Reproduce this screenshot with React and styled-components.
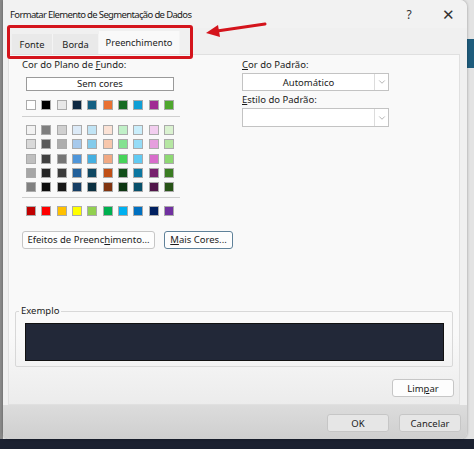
import React from 'react';
import styled, { createGlobalStyle } from 'styled-components';
import { ChevronDown } from 'lucide-react';

// Office theme colours shown in the picker
const themeRow = ['#FFFFFF', '#000000', '#E8E8E8', '#0E2841', '#156082', '#E97132', '#196B24', '#0F9ED5', '#A02B93', '#4EA72E'];
const tintRows = [
  ['#F2F2F2', '#7F7F7F', '#D0D0D0', '#DCEAF7', '#C1E4F5', '#FBE2D5', '#C1F0C8', '#CAEEFB', '#F2CEEF', '#DAF2D0'],
  ['#D9D9D9', '#595959', '#ADADAD', '#A6C9EC', '#83CBEB', '#F7C7AC', '#84E291', '#95DCF7', '#E59EDD', '#B5E6A2'],
  ['#BFBFBF', '#404040', '#757575', '#4E95D9', '#45B0E1', '#F1A983', '#47D45A', '#61CBF3', '#D86DCB', '#8ED973'],
  ['#A6A6A6', '#262626', '#3A3A3A', '#215F9A', '#0F4761', '#C04F15', '#124F1A', '#0B76A0', '#77206D', '#3A7C22'],
  ['#808080', '#0D0D0D', '#161616', '#153D64', '#0A2F40', '#803410', '#0C3511', '#074F6A', '#501549', '#275317'],
];
const standardRow = ['#C00000', '#FF0000', '#FFC000', '#FFFF00', '#92D050', '#00B050', '#00B0F0', '#0070C0', '#002060', '#7030A0'];

const GlobalStyle = createGlobalStyle`
  html, body {
    margin: 0;
    padding: 0;
  }
  body {
    width: 474px;
    height: 449px;
    overflow: hidden;
    font-family: "Noto Sans", "Liberation Sans", sans-serif;
    color: #1b1b1b;
  }
`;

const Desktop = styled.div`
  width: 474px;
  height: 449px;
  box-sizing: border-box;
  padding: 0 7px 10px 3px;
  background:
    linear-gradient(#1e5c7c, #1e5c7c) right 0 top 39px / 7px 29px no-repeat,
    linear-gradient(to top, #1b2130 0 10px, transparent 10px),
    linear-gradient(90deg, #8a8a8a 0 3px, #e3e3e3 3px);
`;

const Dialog = styled.div`
  position: relative;
  width: 464px;
  height: 439px;
  display: flex;
  flex-direction: column;
  background: #f0f0f0;
  border-radius: 0 7px 7px 7px;
  box-shadow: 0 0 3px rgba(0, 0, 0, 0.35);
  overflow: hidden;
`;

const TitleBar = styled.div`
  height: 28px;
  display: flex;
  align-items: center;
  padding-left: 7px;
  background: #f2f2f2;
`;

const TitleText = styled.span`
  flex: 1;
  padding-top: 1px;
  font-size: 9.5px;
  letter-spacing: -0.65px;
`;

const TitleButton = styled.span`
  width: 30px;
  text-align: center;
  font-size: ${p => p.$size || 12}px;
  color: #333;
  margin-right: ${p => p.$gap || 0}px;
`;

const TabStrip = styled.div`
  height: 26px;
  display: flex;
  align-items: flex-end;
  padding-left: 9px;
`;

const Tab = styled.div`
  width: ${p => p.$w}px;
  height: ${p => (p.$active ? 23 : 20)}px;
  display: flex;
  align-items: center;
  justify-content: center;
  font-size: 9.3px;
  background: ${p => (p.$active ? '#f9f9f9' : '#e9e9e9')};
  border-right: 1px solid #f4f4f4;
  box-sizing: border-box;
`;

const Highlight = styled.div`
  position: absolute;
  left: 4px;
  top: 25px;
  width: 186px;
  height: 34px;
  box-sizing: border-box;
  border: 3px solid #d4141c;
  border-radius: 3px;
`;

const Arrow = styled.svg`
  position: absolute;
  left: 196px;
  top: 17px;
`;

const Panel = styled.div`
  height: 351px;
  margin: 0 7px 0 5px;
  box-sizing: border-box;
  display: flex;
  flex-direction: column;
  background: linear-gradient(#f9f9f9 80%, #ececec);
  border: 1px solid #e0e0e0;
`;

const TopSection = styled.div`
  display: flex;
  padding: 4px 0 0 13px;
  gap: 62px;
`;

const Column = styled.div`
  width: ${p => p.$w}px;
  display: flex;
  flex-direction: column;
`;

const Label = styled.div`
  font-size: 9.5px;
  line-height: 12px;
  margin-top: ${p => p.$mt || 0}px;
  white-space: nowrap;
`;

const WideButton = styled.div`
  height: 14px;
  margin: 6px 6px 0 4px;
  box-sizing: border-box;
  border: 1px solid #9a9a9a;
  background: #fff;
  font-size: 9.5px;
  line-height: 12px;
  text-align: center;
`;

const SwatchRow = styled.div`
  display: flex;
  gap: 5.33px;
  margin: ${p => p.$mt || 0}px 0 0 4px;
`;

const SwatchGrid = styled.div`
  display: grid;
  grid-template-columns: repeat(10, 10px);
  column-gap: 5.33px;
  row-gap: 4.3px;
  margin: 8px 0 0 4px;
`;

const Swatch = styled.div`
  width: 10px;
  height: 10px;
  box-sizing: border-box;
  border: 1px solid #ababab;
  background: ${p => p.$c};
`;

const Separator = styled.div`
  height: 1px;
  background: #cfcfcf;
  margin-top: ${p => p.$mt}px;
`;

const Select = styled.div`
  height: ${p => p.$h}px;
  margin-top: 2px;
  display: flex;
  box-sizing: border-box;
  border: 1px solid #c3c3c3;
  background: #fff;
`;

const SelectValue = styled.div`
  flex: 1;
  display: flex;
  align-items: center;
  justify-content: center;
  font-size: 9.5px;
`;

const SelectArrow = styled.div`
  width: 13px;
  display: flex;
  align-items: center;
  justify-content: center;
  border-left: 1px solid #dcdcdc;
  color: #888;
`;

const ButtonRow = styled.div`
  display: flex;
  gap: 9px;
  padding-left: 13px;
  margin-top: 15px;
`;

const Button = styled.div`
  width: ${p => p.$w}px;
  height: ${p => p.$h || 18}px;
  box-sizing: border-box;
  display: flex;
  align-items: center;
  justify-content: center;
  font-size: 9.5px;
  background: ${p => p.$bg || '#fdfdfd'};
  border: 1px solid ${p => (p.$focus ? '#5f8199' : '#c6c6c6')};
  border-radius: 3px;
  box-shadow: ${p => (p.$focus ? 'inset 0 0 0 1px #fff' : 'none')};
`;

const Spacer = styled.div`
  flex: 1;
`;

const Group = styled.fieldset`
  margin: 0 6px;
  padding: 0 8px 5px 9px;
  border: 1px solid #d8d8d8;
  border-radius: 2px;
  min-width: 0;
`;

const Legend = styled.legend`
  padding: 0 2px;
  margin-left: -6px;
  font-size: 9.5px;
  line-height: 12px;
`;

const Sample = styled.div`
  height: 38px;
  margin-top: 6px;
  box-sizing: border-box;
  background: #222838;
  border: 1px solid #111;
`;

const RightRow = styled.div`
  display: flex;
  justify-content: flex-end;
  gap: 10px;
  padding-right: ${p => p.$pr}px;
  margin: ${p => p.$m};
`;

const Footer = styled.div`
  flex: 1;
  display: flex;
  flex-direction: column;
  background: linear-gradient(#dcdcdc, #cfcfcf);
`;

const Swatches = ({ colors }) => colors.map((c, i) => <Swatch key={i} $c={c} />);

export default function App() {
  return (
    <>
      <GlobalStyle />
      <Desktop>
        <Dialog>
          <TitleBar>
            <TitleText>Formatar Elemento de Segmentação de Dados</TitleText>
            <TitleButton $gap={9}>?</TitleButton>
            <TitleButton $size={15} $gap={4}>✕</TitleButton>
          </TitleBar>
          <TabStrip>
            <Tab $w={41}>Fonte</Tab>
            <Tab $w={46}>Borda</Tab>
            <Tab $w={81} $active>Preenchimento</Tab>
          </TabStrip>
          <Panel>
            <TopSection>
              <Column $w={158}>
                <Label>Cor do Plano de <u>F</u>undo:</Label>
                <WideButton>Sem cores</WideButton>
                <SwatchRow $mt={9}>
                  <Swatches colors={themeRow} />
                </SwatchRow>
                <Separator $mt={6} />
                <SwatchGrid>
                  {tintRows.map((row, r) => <Swatches key={r} colors={row} />)}
                </SwatchGrid>
                <Separator $mt={4.5} />
                <SwatchRow $mt={8}>
                  <Swatches colors={standardRow} />
                </SwatchRow>
              </Column>
              <Column $w={147}>
                <Label><u>C</u>or do Padrão:</Label>
                <Select $h={18}>
                  <SelectValue>Automático</SelectValue>
                  <SelectArrow><ChevronDown size={10} strokeWidth={1.5} /></SelectArrow>
                </Select>
                <Label $mt={3}><u>E</u>stilo do Padrão:</Label>
                <Select $h={19}>
                  <SelectValue />
                  <SelectArrow><ChevronDown size={10} strokeWidth={1.5} /></SelectArrow>
                </Select>
              </Column>
            </TopSection>
            <ButtonRow>
              <Button $w={133}>Efeitos de Preenc<u>h</u>imento...</Button>
              <Button $w={69} $focus><u>M</u>ais Cores...</Button>
            </ButtonRow>
            <Spacer />
            <Group>
              <Legend>Exemplo</Legend>
              <Sample />
            </Group>
            <RightRow $pr={5} $m="12px 0 7px">
              <Button $w={62}>Lim<u>p</u>ar</Button>
            </RightRow>
          </Panel>
          <Footer>
            <RightRow $pr={6} $m="9px 0 0">
              <Button $w={62} $bg="#e6e6e6">OK</Button>
              <Button $w={62} $bg="#e6e6e6">Cancelar</Button>
            </RightRow>
          </Footer>
          <Highlight />
          <Arrow width="70" height="22" viewBox="0 0 70 22">
            <path d="M66 7 L18 14" stroke="#d4141c" strokeWidth="3" strokeLinecap="round" fill="none" />
            <path d="M7 16 L19 8 L21 20 Z" fill="#d4141c" />
          </Arrow>
        </Dialog>
      </Desktop>
    </>
  );
}
